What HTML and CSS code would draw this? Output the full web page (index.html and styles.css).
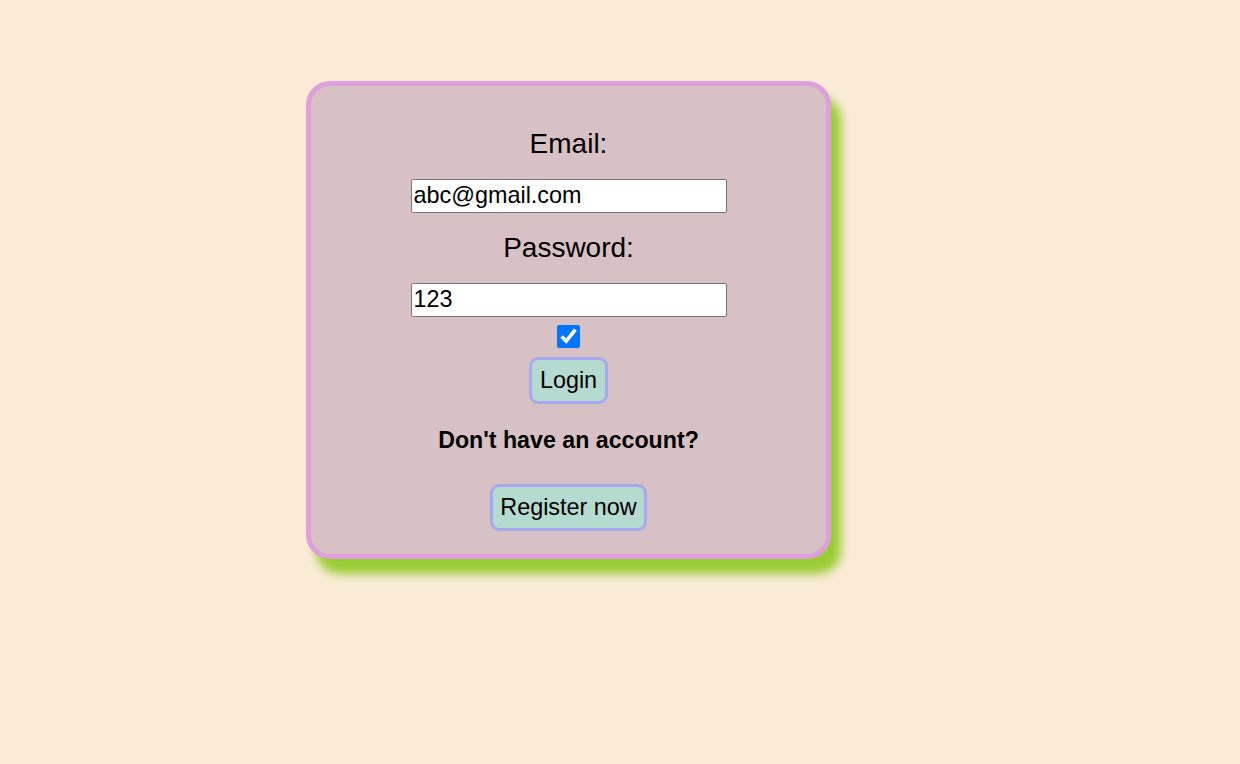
FILE: index.html
```html
<!DOCTYPE html>
<html lang="en">
<head>
<meta charset="utf-8">
<title>Login</title>
<link rel="stylesheet" href="styles.css">
</head>
<body>
<div class="page">
  <form class="card">
    <label class="label" for="email">Email:</label>
    <input class="field field-email" id="email" type="text" value="abc@gmail.com">
    <label class="label label-pass" for="pass">Password:</label>
    <input class="field field-pass" id="pass" type="text" value="123">
    <input class="check" type="checkbox" checked>
    <button class="btn btn-login" type="button">Login</button>
    <h3 class="prompt">Don't have an account?</h3>
    <button class="btn btn-register" type="button">Register now</button>
  </form>
</div>
</body>
</html>
```
FILE: styles.css
```css
html, body {
  margin: 0;
  padding: 0;
  background: #faebd7;
  font-family: Arial, "Liberation Sans", sans-serif;
}

.page {
  padding: 81px 0 0 306px;
  min-height: 764px;
  box-sizing: border-box;
}

.card {
  box-sizing: border-box;
  width: 525px;
  height: 478px;
  border: 5px solid #dda0dd;
  border-radius: 24px;
  background: #d8c1c4;
  box-shadow: 10px 15px 10px #9acd32;
  display: flex;
  flex-direction: column;
  align-items: center;
  padding-top: 42px;
}

.label {
  display: block;
  font-size: 28px;
  line-height: 32px;
  color: #000;
}

.label-pass {
  margin-top: 19px;
}

.field {
  box-sizing: border-box;
  width: 316px;
  height: 34px;
  margin: 19px 0 0;
  padding: 0 2px 2px;
  border: 1px solid #767676;
  border-radius: 2px;
  background: #fff;
  font-family: Arial, "Liberation Sans", sans-serif;
  font-size: 23.4px;
  color: #000;
}

.field-pass {
  margin-top: 19px;
}

.check {
  width: 23px;
  height: 23px;
  margin: 8px 0 0;
}

.btn {
  box-sizing: border-box;
  height: 47px;
  padding: 0 7.5px;
  border: 3px solid #a8a8f2;
  border-radius: 9px;
  background: #b5dbd0;
  font-family: Arial, "Liberation Sans", sans-serif;
  font-size: 23.4px;
  color: #000;
}

.btn-login {
  margin-top: 9px;
}

.prompt {
  margin: 23px 0 0;
  font-size: 23.2px;
  line-height: 27px;
  font-weight: bold;
}

.btn-register {
  margin-top: 30px;
}
```
